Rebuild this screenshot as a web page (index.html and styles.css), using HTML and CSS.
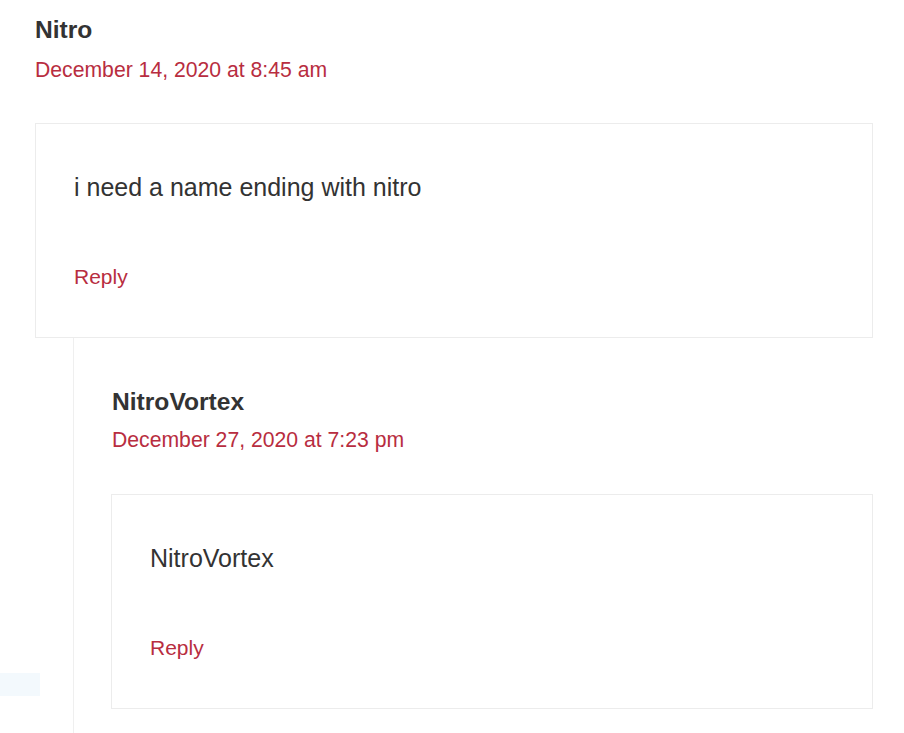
FILE: index.html
```html
<!DOCTYPE html>
<html lang="en">

<head>
    <meta charset="UTF-8">
    <meta name="viewport" content="width=device-width, initial-scale=1.0">
    <title>Comments</title>
    <link rel="stylesheet" href="styles.css">
</head>

<body>

    <div class="comment-list">
        <div class="comment">
            <div class="author">Nitro</div>
            <div class="date">December 14, 2020 at 8:45 am</div>
            <div class="comment-body">
                <p>i need a name ending with nitro</p>
                <a class="reply" href="#">Reply</a>
            </div>

            <div class="children">
                <div class="comment">
                    <div class="author">NitroVortex</div>
                    <div class="date">December 27, 2020 at 7:23 pm</div>
                    <div class="comment-body">
                        <p>NitroVortex</p>
                        <a class="reply" href="#">Reply</a>
                    </div>
                </div>
            </div>
        </div>
    </div>

    <div class="side-tab"></div>

</body>

</html>
```

FILE: styles.css
```css
/* Basic Reset */
* {
    margin: 0;
    padding: 0;
    box-sizing: border-box;
}

body {
    background-color: #fff;
    font-family: "Liberation Sans", Arial, sans-serif;
    color: #333;
    overflow: hidden;
    height: 733px;
}

.comment-list {
    padding: 12px 31px 0 35px;
}

.author {
    font-size: 24.6px;
    font-weight: bold;
    line-height: 36px;
    color: #333;
}

.date {
    margin-top: 6px;
    font-size: 21.2px;
    line-height: 32px;
    color: #b82d40;
}

.comment-body {
    margin-top: 37px;
    border: 1px solid #ececec;
    padding: 44px 38px 44px;
}

.comment-body p {
    font-size: 25px;
    line-height: 38px;
    color: #333;
}

.reply {
    display: block;
    margin-top: 55px;
    font-size: 21px;
    line-height: 32px;
    color: #b82d40;
    text-decoration: none;
}

/* Nested replies */
.children {
    margin-left: 38px;
    border-left: 1px solid #efefef;
    padding: 46px 0 25px 37px;
}

.children .author {
    padding-left: 1px;
}

.children .date {
    margin-top: 4px;
    padding-left: 1px;
}

.children .comment-body {
    margin-top: 38px;
}

.side-tab {
    position: absolute;
    left: 0;
    top: 673px;
    width: 40px;
    height: 23px;
    background-color: #f3f9fd;
}
```
